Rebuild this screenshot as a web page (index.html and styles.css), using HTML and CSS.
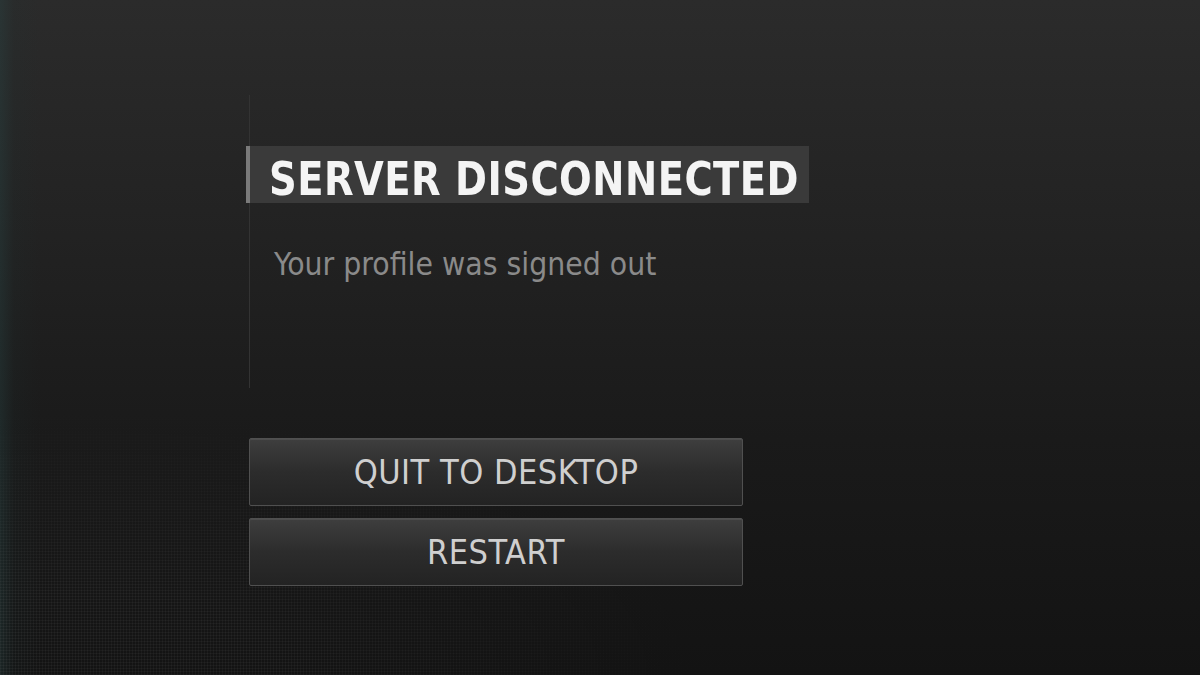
FILE: index.html
```html
<!DOCTYPE html>
<html>
<head>
<meta charset="utf-8">
<link rel="stylesheet" href="styles.css">
</head>
<body>
<div class="screen">
  <div class="dots"></div>
  <div class="dialog">
    <div class="panel">
      <div class="title-bar"><h1 class="title">SERVER DISCONNECTED</h1></div>
      <p class="message">Your profile was signed out</p>
    </div>
    <div class="actions">
      <button class="btn">QUIT TO DESKTOP</button>
      <button class="btn">RESTART</button>
    </div>
  </div>
</div>
</body>
</html>
```
FILE: styles.css
```css
html, body {
  margin: 0;
  padding: 0;
  width: 1200px;
  height: 675px;
  overflow: hidden;
  background: #1a1a1a;
}
.screen {
  position: relative;
  width: 1200px;
  height: 675px;
  background:
    linear-gradient(90deg, rgba(40,70,70,0.35) 0px, rgba(30,50,50,0.12) 14px, rgba(0,0,0,0) 40px),
    linear-gradient(180deg, #2b2b2b 0%, #222 35%, #1a1a1a 65%, #131313 100%);
  overflow: hidden;
  font-family: "DejaVu Sans Condensed", "DejaVu Sans", sans-serif;
}
.dots {
  position: absolute;
  left: 0;
  top: 400px;
  width: 900px;
  height: 275px;
  background-image:
    repeating-linear-gradient(90deg, rgba(255,255,255,0.035) 0 1px, transparent 1px 3px),
    repeating-linear-gradient(0deg, rgba(255,255,255,0.035) 0 1px, transparent 1px 3px);
  mask-image: radial-gradient(ellipse 70% 100% at 10% 100%, #000 30%, transparent 100%);
  pointer-events: none;
}
.dialog {
  position: relative;
  display: flex;
  flex-direction: column;
  padding: 95px 0 0 249px;
}
.panel {
  border-left: 1px solid #333;
  height: 293px;
  padding-top: 51px;
  box-sizing: border-box;
}
.title-bar {
  display: flex;
  align-items: center;
  margin-left: -4px;
  height: 57px;
  width: 563px;
  box-sizing: border-box;
  border-left: 4px solid #7a7a7a;
  background: #3a3a3a;
  padding-left: 19px;
  padding-top: 8px;
}
.title {
  margin: 0;
  color: #f4f4f4;
  font-weight: bold;
  font-size: 46px;
  letter-spacing: 0.5px;
  line-height: 1;
  white-space: nowrap;
  transform: scaleX(0.93);
  transform-origin: left center;
}
.message {
  margin: 46px 0 0 24px;
  color: #8a8a8a;
  font-size: 31.6px;
  line-height: 1;
  white-space: nowrap;
}
.actions {
  display: flex;
  flex-direction: column;
  gap: 12px;
  margin-top: 50px;
  width: 494px;
}
.btn {
  height: 68px;
  width: 494px;
  border: 1px solid #505050;
  border-radius: 2px;
  background: linear-gradient(180deg, #3e3e3e 0%, #2c2c2c 50%, #232323 100%);
  color: #cfcfcf;
  font-family: "DejaVu Sans Condensed", "DejaVu Sans", sans-serif;
  font-size: 34px;
  letter-spacing: 0.5px;
  padding: 0;
  line-height: 1;
  box-shadow: inset 0 1px 0 rgba(255,255,255,0.08);
}
```
